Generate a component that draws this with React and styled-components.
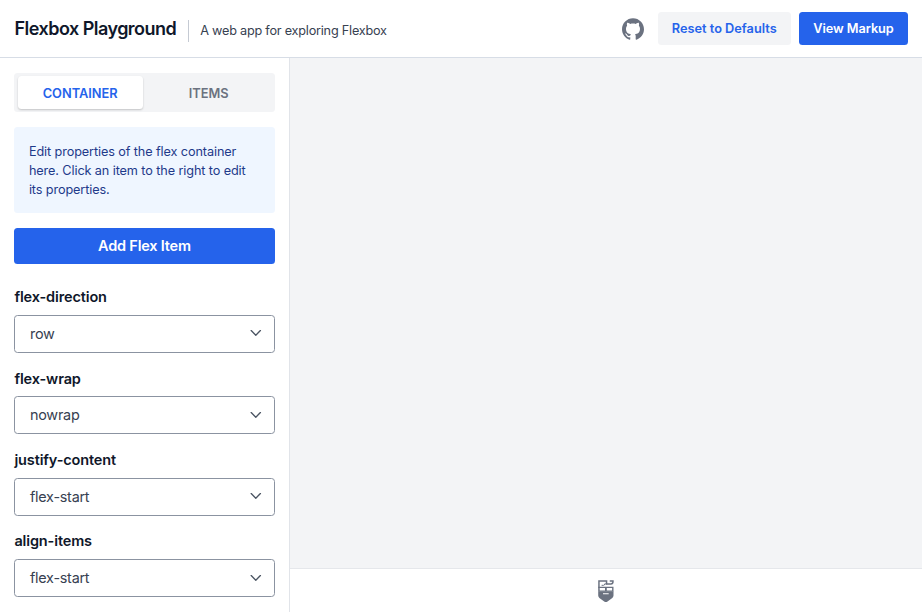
import styled, { createGlobalStyle } from "styled-components";
import { SiGithub } from "react-icons/si";

const properties = [
  { name: "flex-direction", value: "row" },
  { name: "flex-wrap", value: "nowrap" },
  { name: "justify-content", value: "flex-start" },
  { name: "align-items", value: "flex-start" },
];

const App = () => {
  return (
    <>
      <GlobalStyle />
      <Page>
        <Header>
          <Brand>
            <Title>Flexbox Playground</Title>
            <Tagline>A web app for exploring Flexbox</Tagline>
          </Brand>
          <Actions>
            <GithubLink href="#" aria-label="GitHub">
              <SiGithub size={22} />
            </GithubLink>
            <Button>Reset to Defaults</Button>
            <Button $primary>View Markup</Button>
          </Actions>
        </Header>
        <Body>
          <Sidebar>
            <Tabs>
              <Tab $active>Container</Tab>
              <Tab>Items</Tab>
            </Tabs>
            <Info>
              Edit properties of the flex container here. Click an item to the
              right to edit its properties.
            </Info>
            <AddButton>Add Flex Item</AddButton>
            {properties.map(({ name, value }) => (
              <Field key={name}>
                <Label>{name}</Label>
                <Select type="button">
                  {value}
                  <Chevron />
                </Select>
              </Field>
            ))}
          </Sidebar>
          <Main>
            <Canvas />
            <Footer>
              <BeardLogo />
            </Footer>
          </Main>
        </Body>
      </Page>
    </>
  );
};

export default App;

const Chevron = () => (
  <svg width="12" height="8" viewBox="0 0 12 8" fill="none">
    <path
      d="M1.2 1.6 5.8 6.2l4.6-4.6"
      stroke="#4b5563"
      strokeWidth="1.35"
      strokeLinecap="round"
      strokeLinejoin="round"
    />
  </svg>
);

const BeardLogo = () => (
  <svg width="16" height="22" viewBox="0 0 16 22" fill="#6b7280">
    {/* hair */}
    <path
      d="M.95 8V.9h7.6v3h4.3c1.4 0 2.1-.6 2.1-1.8V.9h-3.2"
      fill="none"
      stroke="#6b7280"
      strokeWidth="1.5"
    />
    <path
      d="M3.6 5.3h2c.7 0 1.1-.5 1.1-1.4h2.5"
      fill="none"
      stroke="#6b7280"
      strokeWidth="1"
    />
    {/* glasses */}
    <path
      fillRule="evenodd"
      d="M.2 6.8h15.3v4.9H.2zM1.7 8.1v2.4H7V8.1zM8.8 8.1v2.4h5.3V8.1z"
    />
    {/* beard */}
    <path
      fillRule="evenodd"
      d="M.2 11.5h15.3v4.1c0 1-.4 1.7-1.2 2.3L9.5 21.4c-1.1.8-2.2.8-3.3 0l-4.8-3.5C.6 17.3.2 16.6.2 15.6zM5 13.2v1.1h5.7v-1.1z"
    />
  </svg>
);

const GlobalStyle = createGlobalStyle`
  * {
    box-sizing: border-box;
  }

  body,
  h1,
  p {
    margin: 0;
  }

  body,
  button {
    font-family: "Inter", sans-serif;
  }

  button {
    cursor: pointer;
  }
`;

const Page = styled.div`
  display: flex;
  flex-direction: column;
  height: 100vh;
  overflow: hidden;
  background-color: #fff;
`;

const Header = styled.header`
  flex: none;
  display: flex;
  align-items: center;
  justify-content: space-between;
  height: 58px;
  padding: 0 14px 0 14.5px;
  border-bottom: 1px solid #d7dde6;
`;

const Brand = styled.div`
  display: flex;
  align-items: center;
`;

const Title = styled.h1`
  padding-right: 12px;
  font-size: 18px;
  font-weight: 600;
  line-height: 24px;
  letter-spacing: -0.53px;
  color: #0f172a;
`;

const Tagline = styled.p`
  margin-top: 4px;
  padding-left: 11px;
  border-left: 1px solid #c5cad3;
  font-size: 12.7px;
  line-height: 22px;
  letter-spacing: -0.23px;
  color: #374151;
`;

const Actions = styled.div`
  display: flex;
  align-items: center;
  gap: 8px;
`;

const GithubLink = styled.a`
  display: flex;
  margin-right: 6px;
  color: #6b7280;
`;

const Button = styled.button`
  height: 33px;
  padding: 0 14.3px;
  border: none;
  border-radius: 3.5px;
  font-size: 12.75px;
  font-weight: 600;
  letter-spacing: ${({ $primary }) => ($primary ? "-0.07px" : "0")};
  color: ${({ $primary }) => ($primary ? "#fff" : "#2563eb")};
  background-color: ${({ $primary }) => ($primary ? "#2563eb" : "#f3f4f6")};
`;

const Body = styled.div`
  flex: 1;
  display: flex;
  min-height: 0;
`;

const Sidebar = styled.aside`
  flex: none;
  width: 290px;
  padding: 15px 14.5px 0 14.4px;
  border-right: 1px solid #e1e4e9;
  overflow: hidden;
`;

const Tabs = styled.div`
  display: flex;
  height: 39px;
  padding: 3px 4px;
  border-radius: 3.5px;
  background-color: #f3f4f6;
`;

const Tab = styled.button`
  flex: ${({ $active }) => ($active ? "0 0 124.6px" : 1)};
  padding: ${({ $active }) => ($active ? "1px 1px 0 0" : "1px 0 0 4px")};
  border: none;
  border-radius: 3.5px;
  font-size: 12.8px;
  font-weight: 600;
  text-transform: uppercase;
  color: ${({ $active }) => ($active ? "#2563eb" : "#6b7280")};
  background-color: ${({ $active }) => ($active ? "#fff" : "transparent")};
  box-shadow: ${({ $active }) =>
    $active ? "0 1px 2px rgba(0, 0, 0, 0.2)" : "none"};
`;

const Info = styled.p`
  height: 86px;
  margin-top: 15px;
  padding: 15px 14.5px 0;
  border-radius: 3.5px;
  font-size: 12.7px;
  line-height: 19px;
  letter-spacing: -0.11px;
  color: #1e3a8a;
  background-color: #eff6ff;
`;

const AddButton = styled.button`
  display: block;
  width: 100%;
  height: 36px;
  margin: 15px 0 22px;
  padding: 0 0 1px;
  border: none;
  border-radius: 3.5px;
  font-size: 14.5px;
  font-weight: 600;
  letter-spacing: -0.2px;
  color: #fff;
  background-color: #2563eb;
`;

const Field = styled.div`
  height: 81.4px;
`;

const Label = styled.p`
  padding-top: 0.3px;
  margin-bottom: 6.7px;
  font-size: 14.5px;
  font-weight: 600;
  line-height: 22px;
  letter-spacing: -0.13px;
  color: #0f172a;
`;

const Select = styled.button`
  display: flex;
  align-items: center;
  justify-content: space-between;
  width: 100%;
  height: 38px;
  padding: 0 12px 1px 14.6px;
  border: 1px solid #8b93a1;
  border-radius: 3.5px;
  font-size: 14.4px;
  letter-spacing: -0.25px;
  color: #374151;
  background-color: #fff;
`;

const Main = styled.main`
  flex: 1;
  display: flex;
  flex-direction: column;
`;

const Canvas = styled.div`
  flex: 1;
  background-color: #f3f4f6;
`;

const Footer = styled.footer`
  display: flex;
  align-items: center;
  justify-content: center;
  height: 44px;
  border-top: 1px solid #e5e7eb;
`;
